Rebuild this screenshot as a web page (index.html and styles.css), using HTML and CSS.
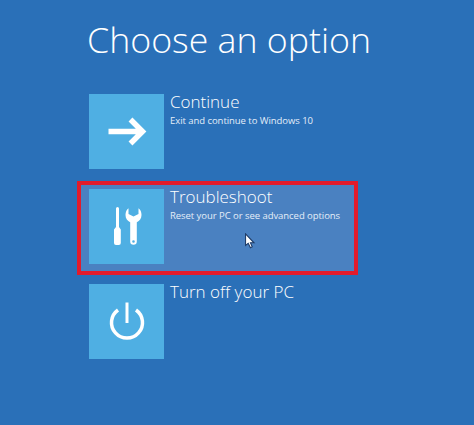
FILE: index.html
```html
<!DOCTYPE html>
<html lang="en">
<head>
  <meta charset="UTF-8" />
  <title>Choose an option</title>
  <link rel="stylesheet" href="styles.css">
</head>
<body>
  <main class="screen">
    <h1 class="screen-title">Choose an option</h1>
    <div class="options">
      <div class="option">
        <div class="tile">
          <svg class="tile-icon" viewBox="0 0 40 40">
            <path d="M1.500 19.500H34M23.500 7.500L35.500 19.500L23.500 31.500" fill="none" stroke="#fff" stroke-width="5.500"/>
          </svg>
        </div>
        <div class="option-text">
          <div class="option-name">Continue</div>
          <div class="option-desc">Exit and continue to Windows 10</div>
        </div>
      </div>
      <div class="option selected">
        <div class="tile">
          <svg class="tile-icon" viewBox="0 0 40 40">
            <path fill="#fff" d="M9 1.500a1.500 1.500 0 0 1 3 0V20l1.800 2.500V36a2 2 0 0 1-2 2H9a2 2 0 0 1-2-2V22.500L9 20z"/>
            <path fill="#fff" fill-rule="evenodd" d="M21.500 1.200V7L26.500 9.500L31.500 7V1.200C33.500 2.500 34.500 5 34.500 8C34.500 11.500 32.500 14 29.800 15.300V34.500a3.300 3.300 0 0 1-6.600 0V15.300C20.500 14 18.500 11.500 18.500 8C18.500 5 19.500 2.500 21.500 1.200ZM26.500 33.200a1.300 1.300 0 1 0 0 2.600a1.300 1.300 0 0 0 0-2.600Z"/>
          </svg>
        </div>
        <div class="option-text">
          <div class="option-name">Troubleshoot</div>
          <div class="option-desc">Reset your PC or see advanced options</div>
        </div>
        <svg class="pointer" viewBox="0 0 12 18">
          <path d="M1 1V14L4 11.500L6.500 16.500L8.500 15.500L6.500 11H10.500Z" fill="#fff" stroke="#1c3a66" stroke-width="1.200"/>
        </svg>
      </div>
      <div class="option">
        <div class="tile">
          <svg class="tile-icon" viewBox="0 0 40 40">
            <path d="M20 .5V21" fill="none" stroke="#fff" stroke-width="3"/>
            <path d="M11 8A15.500 15.500 0 1 0 29 8" fill="none" stroke="#fff" stroke-width="3.500"/>
          </svg>
        </div>
        <div class="option-text">
          <div class="option-name">Turn off your PC</div>
        </div>
      </div>
    </div>
  </main>
</body>
</html>
```

FILE: styles.css
```css
body, html {
  margin: 0;
  padding: 0;
  height: 100%;
}
body {
  background: #2a70b8;
  color: #fff;
  font-family: "Open Sans", "Liberation Sans", sans-serif;
  overflow: hidden;
}
.screen {
  padding: 10px 0 0 77px;
}
.screen-title {
  margin: 0 0 17px 10px;
  font-size: 35.700px;
  line-height: 59px;
  font-weight: 300;
  white-space: nowrap;
}
.options {
  display: flex;
  flex-direction: column;
  gap: 1px;
}
.option {
  position: relative;
  display: flex;
  gap: 6px;
  box-sizing: border-box;
  width: 281px;
  height: 94px;
  padding: 4px 8px;
  border: 4px solid transparent;
}
.option.selected {
  background: #4a81c1;
  border-color: #e21b2c;
}
.tile {
  flex: none;
  display: flex;
  align-items: center;
  justify-content: center;
  width: 75px;
  height: 75px;
  background: #4fafe3;
}
.tile-icon {
  width: 40px;
  height: 40px;
}
.option-text {
  min-width: 0;
}
.option-name {
  font-size: 17px;
  line-height: 22px;
  font-weight: 300;
  margin-top: -3px;
  white-space: nowrap;
}
.option-desc {
  font-size: 9.500px;
  line-height: 14px;
  margin-top: 1px;
  letter-spacing: -0.05px;
  white-space: nowrap;
  color: #e4eef8;
}
.pointer {
  position: absolute;
  left: 163px;
  top: 48px;
  width: 12px;
  height: 16px;
}
```
